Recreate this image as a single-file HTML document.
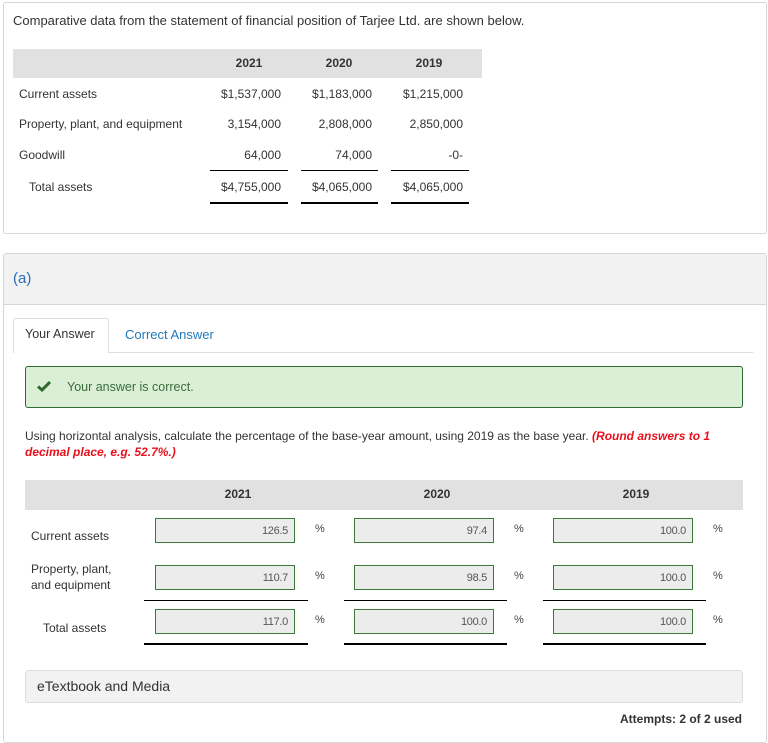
<!DOCTYPE html>
<html><head><meta charset="utf-8"><style>
body{margin:0;width:768px;height:743px;background:#fff;font-family:"Liberation Sans",sans-serif;color:#333;position:relative;overflow:hidden}
.a{position:absolute;white-space:nowrap}
.card{position:absolute;border:1px solid #d6d6d6;border-radius:3px;background:#fff}
.f12{font-size:12px}
.r{text-align:right}
.c{text-align:center}
.inp{position:absolute;width:140px;height:25px;background:#ececec;border:1px solid #3c7a3c;font-size:11px;color:#555;text-align:right;box-sizing:border-box;padding:6px 6px 0 0;letter-spacing:-0.3px}
.pc{position:absolute;font-size:11px;color:#444}
.ln{position:absolute;height:1px;background:#000}
.lt{position:absolute;height:2px;background:#000}
</style></head><body>
<div class="card" style="left:3px;top:2px;width:762px;height:230px"></div>
<div class="a" style="left:13px;top:13px;font-size:13px">Comparative data from the statement of financial position of Tarjee Ltd. are shown below.</div>
<div class="a" style="left:13px;top:49px;width:469px;height:29px;background:#e1e1e1"></div>
<div class="a f12 c" style="left:220px;top:56px;width:58px;font-weight:bold">2021</div>
<div class="a f12 c" style="left:310px;top:56px;width:58px;font-weight:bold">2020</div>
<div class="a f12 c" style="left:400px;top:56px;width:58px;font-weight:bold">2019</div>
<div class="a f12" style="left:19px;top:87px">Current assets</div>
<div class="a f12" style="left:19px;top:117px">Property, plant, and equipment</div>
<div class="a f12" style="left:19px;top:148px">Goodwill</div>
<div class="a f12" style="left:29px;top:180px">Total assets</div>
<div class="a f12 r" style="left:180px;top:87px;width:101px">$1,537,000</div>
<div class="a f12 r" style="left:270px;top:87px;width:102px">$1,183,000</div>
<div class="a f12 r" style="left:360px;top:87px;width:103px">$1,215,000</div>
<div class="a f12 r" style="left:180px;top:117px;width:101px">3,154,000</div>
<div class="a f12 r" style="left:270px;top:117px;width:102px">2,808,000</div>
<div class="a f12 r" style="left:360px;top:117px;width:103px">2,850,000</div>
<div class="a f12 r" style="left:180px;top:148px;width:101px">64,000</div>
<div class="a f12 r" style="left:270px;top:148px;width:102px">74,000</div>
<div class="a f12 r" style="left:360px;top:148px;width:103px">-0-</div>
<div class="a f12 r" style="left:180px;top:180px;width:101px">$4,755,000</div>
<div class="a f12 r" style="left:270px;top:180px;width:102px">$4,065,000</div>
<div class="a f12 r" style="left:360px;top:180px;width:103px">$4,065,000</div>
<div class="ln" style="left:210px;top:170px;width:78px"></div>
<div class="ln" style="left:301px;top:170px;width:77px"></div>
<div class="ln" style="left:391px;top:170px;width:78px"></div>
<div class="lt" style="left:210px;top:202px;width:78px"></div>
<div class="lt" style="left:301px;top:202px;width:77px"></div>
<div class="lt" style="left:391px;top:202px;width:78px"></div>

<div class="card" style="left:3px;top:253px;width:762px;height:488px"></div>
<div class="a" style="left:4px;top:254px;width:762px;height:50px;background:#f2f2f2;border-bottom:1px solid #d6d6d6"></div>
<div class="a" style="left:13px;top:270px;font-size:15px;color:#2a6ebb">(a)</div>
<div class="a" style="left:13px;top:352px;width:740px;height:1px;background:#ddd"></div>
<div class="a" style="left:13px;top:318px;width:96px;height:35px;background:#fff;border:1px solid #ddd;border-bottom:none;border-radius:3px 3px 0 0;box-sizing:border-box"></div>
<div class="a" style="left:25px;top:327px;font-size:12.5px;color:#333">Your Answer</div>
<div class="a" style="left:125px;top:327px;font-size:13px;color:#1f7ab8">Correct Answer</div>
<div class="a" style="left:25px;top:366px;width:718px;height:42px;background:#dbeed6;border:1px solid #2f6a32;border-radius:3px;box-sizing:border-box"></div>
<svg class="a" style="left:37px;top:380px" width="14" height="12" viewBox="0 0 14 12"><path d="M1 6.5 L5 10 L13 2" stroke="#2d6a2d" stroke-width="3" fill="none"/></svg>
<div class="a" style="left:67px;top:380px;font-size:12.5px;color:#3a6e3a">Your answer is correct.</div>
<div class="a f12" style="left:25px;top:429px">Using horizontal analysis, calculate the percentage of the base-year amount, using 2019 as the base year. <b style="color:#e8111c;font-style:italic">(Round answers to 1</b></div>
<div class="a f12" style="left:25px;top:445px;color:#e8111c;font-weight:bold;font-style:italic">decimal place, e.g. 52.7%.)</div>
<div class="a" style="left:25px;top:480px;width:718px;height:30px;background:#e1e1e1"></div>
<div class="a f12 c" style="left:208px;top:487px;width:60px;font-weight:bold">2021</div>
<div class="a f12 c" style="left:407px;top:487px;width:60px;font-weight:bold">2020</div>
<div class="a f12 c" style="left:606px;top:487px;width:60px;font-weight:bold">2019</div>
<div class="a f12" style="left:31px;top:529px">Current assets</div>
<div class="a f12" style="left:31px;top:561px;line-height:16px">Property, plant,<br>and equipment</div>
<div class="a f12" style="left:43px;top:621px">Total assets</div>

<div class="inp" style="left:155px;top:518px">126.5</div>
<div class="inp" style="left:354px;top:518px">97.4</div>
<div class="inp" style="left:553px;top:518px">100.0</div>
<div class="inp" style="left:155px;top:565px">110.7</div>
<div class="inp" style="left:354px;top:565px">98.5</div>
<div class="inp" style="left:553px;top:565px">100.0</div>
<div class="inp" style="left:155px;top:609px">117.0</div>
<div class="inp" style="left:354px;top:609px">100.0</div>
<div class="inp" style="left:553px;top:609px">100.0</div>
<div class="pc" style="left:315px;top:523px">%</div><div class="pc" style="left:514px;top:523px">%</div><div class="pc" style="left:713px;top:523px">%</div>
<div class="pc" style="left:315px;top:570px">%</div><div class="pc" style="left:514px;top:570px">%</div><div class="pc" style="left:713px;top:570px">%</div>
<div class="pc" style="left:315px;top:614px">%</div><div class="pc" style="left:514px;top:614px">%</div><div class="pc" style="left:713px;top:614px">%</div>
<div class="ln" style="left:144px;top:600px;width:164px"></div>
<div class="ln" style="left:344px;top:600px;width:163px"></div>
<div class="ln" style="left:543px;top:600px;width:163px"></div>
<div class="lt" style="left:144px;top:643px;width:164px"></div>
<div class="lt" style="left:344px;top:643px;width:163px"></div>
<div class="lt" style="left:543px;top:643px;width:163px"></div>

<div class="a" style="left:25px;top:670px;width:718px;height:33px;background:#f2f2f2;border:1px solid #ddd;border-radius:3px;box-sizing:border-box"></div>
<div class="a" style="left:37px;top:678px;font-size:14px;color:#333">eTextbook and Media</div>
<div class="a f12 r" style="left:543px;top:712px;width:199px;font-weight:bold">Attempts: 2 of 2 used</div>
</body></html>
